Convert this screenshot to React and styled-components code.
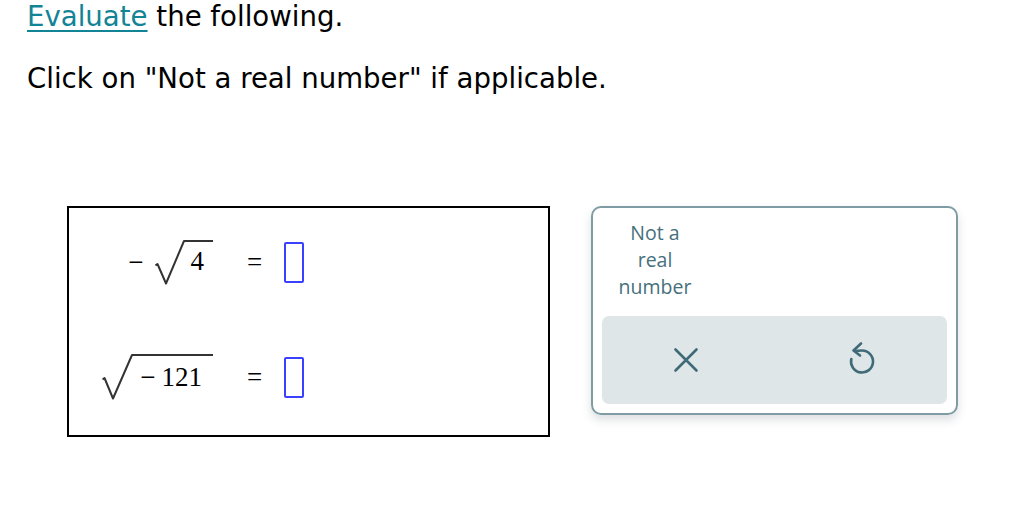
import React from "react";
import styled, { createGlobalStyle } from "styled-components";

const GlobalStyle = createGlobalStyle`
  body {
    margin: 0;
    background: #fff;
    font-family: "DejaVu Sans", Verdana, sans-serif;
  }
`;

const Page = styled.div`
  width: 1028px;
  height: 530px;
  padding: 0 0 0 27px;
  box-sizing: border-box;
`;

const Line = styled.p`
  margin: 0;
  font-size: 27.6px;
  line-height: 34px;
  color: #000;
  padding-top: ${(p) => p.top || 0}px;
`;

const Link = styled.a`
  color: #138496;
  text-decoration: underline;
  text-decoration-thickness: 2px;
  text-underline-offset: 4px;
`;

const Work = styled.div`
  display: flex;
  align-items: flex-start;
  gap: 41px;
  margin-top: 110px;
  margin-left: 40px;
`;

const MathBox = styled.div`
  width: 483px;
  height: 231px;
  box-sizing: border-box;
  border: 2px solid #000;
  display: flex;
  flex-direction: column;
  padding-top: 29px;
  gap: 65px;
`;

const Row = styled.div`
  display: flex;
  align-items: center;
  height: 50px;
  font-family: "Liberation Serif", "Times New Roman", serif;
  font-size: 27px;
  color: #000;
`;

const Expr = styled.div`
  width: 144px;
  display: flex;
  align-items: center;
  justify-content: flex-end;
`;

const Minus = styled.span`
  margin-right: ${(p) => p.gap}px;
  line-height: 1;
`;

const Radical = styled.span`
  display: flex;
  align-items: flex-start;
`;

const Radicand = styled.span`
  border-top: 2px solid #333;
  padding: ${(p) => p.top}px ${(p) => p.right}px 0 ${(p) => p.left}px;
  line-height: 31px;
  white-space: nowrap;
`;

const Equals = styled.span`
  margin-left: 34px;
  margin-right: 22px;
  line-height: 1;
`;

const AnswerBlank = styled.span`
  display: inline-block;
  width: 16px;
  height: 37px;
  border: 2px solid #3a40ff;
  border-radius: 2px;
`;

const Panel = styled.div`
  width: 367px;
  height: 209px;
  box-sizing: border-box;
  border: 2px solid #7f9ca5;
  border-radius: 10px;
  box-shadow: 0 5px 10px rgba(60, 80, 90, 0.18);
  padding: 11px 9px 9px 9px;
  display: flex;
  flex-direction: column;
  justify-content: space-between;
  font-family: "Open Sans", "Lato", sans-serif;
`;

const NotReal = styled.button`
  width: 106px;
  background: none;
  border: none;
  padding: 0;
  font-family: inherit;
  font-size: 19.5px;
  line-height: 27px;
  color: #46707c;
  text-align: center;
  cursor: pointer;
`;

const ActionBar = styled.div`
  height: 88px;
  border-radius: 7px;
  background: #dfe6e8;
  display: grid;
  grid-template-columns: 1fr 1fr;
  align-items: center;
`;

const ActionButton = styled.button`
  background: none;
  border: none;
  padding: 0;
  justify-self: center;
  display: flex;
  cursor: pointer;
  margin-left: ${(p) => p.shift || 0}px;
  margin-top: ${(p) => p.drop || 0}px;
`;

const Sqrt = ({ w, h, start, low }) => (
  <svg width={w} height={h} viewBox={`0 0 ${w} ${h}`} style={{ display: "block" }}>
    <path
      d={`M0.5 ${start + 1.5} L2.5 ${start} L${low} ${h - 1.5} L${w - 1} 1 L${w} 1`}
      fill="none"
      stroke="#333"
      strokeWidth="2"
      strokeLinejoin="round"
    />
  </svg>
);

const CloseIcon = () => (
  <svg width="26" height="26" viewBox="0 0 26 26">
    <path d="M2.5 2.5 L23.5 23.5 M23.5 2.5 L2.5 23.5" stroke="#3f6b78" strokeWidth="2.6" strokeLinecap="round" />
  </svg>
);

const UndoIcon = () => (
  <svg width="30" height="36" viewBox="0 0 30 36">
    <path
      d="M8 11 C10 10.6 12.5 10.5 15 10.5 A11 11 0 1 1 4.3 19"
      fill="none"
      stroke="#3f6b78"
      strokeWidth="2.6"
      strokeLinecap="round"
    />
    <path
      d="M14 3.5 L6.5 10.5 L13 15.5"
      fill="none"
      stroke="#3f6b78"
      strokeWidth="2.6"
      strokeLinecap="round"
      strokeLinejoin="round"
    />
  </svg>
);

export default function App() {
  return (
    <>
      <GlobalStyle />
      <Page>
        <Line top={0}>
          <Link>Evaluate</Link> the following.
        </Line>
        <Line top={28}>Click on "Not a real number" if applicable.</Line>
        <Work>
          <MathBox>
            <Row>
              <Expr>
                <Minus gap={11}>−</Minus>
                <Radical>
                  <Sqrt w={30} h={45} start={24} low={11} />
                  <Radicand top={4} left={6} right={9}>
                    4
                  </Radicand>
                </Radical>
              </Expr>
              <Equals>=</Equals>
              <AnswerBlank />
            </Row>
            <Row>
              <Expr>
                <Radical>
                  <Sqrt w={31} h={46} start={24} low={11} />
                  <Radicand top={6} left={7} right={11}>
                    <Minus gap={6}>−</Minus>121
                  </Radicand>
                </Radical>
              </Expr>
              <Equals>=</Equals>
              <AnswerBlank />
            </Row>
          </MathBox>
          <Panel>
            <NotReal>
              Not a
              <br />
              real
              <br />
              number
            </NotReal>
            <ActionBar>
              <ActionButton shift={-4}>
                <CloseIcon />
              </ActionButton>
              <ActionButton shift={2} drop={-4}>
                <UndoIcon />
              </ActionButton>
            </ActionBar>
          </Panel>
        </Work>
      </Page>
    </>
  );
}
